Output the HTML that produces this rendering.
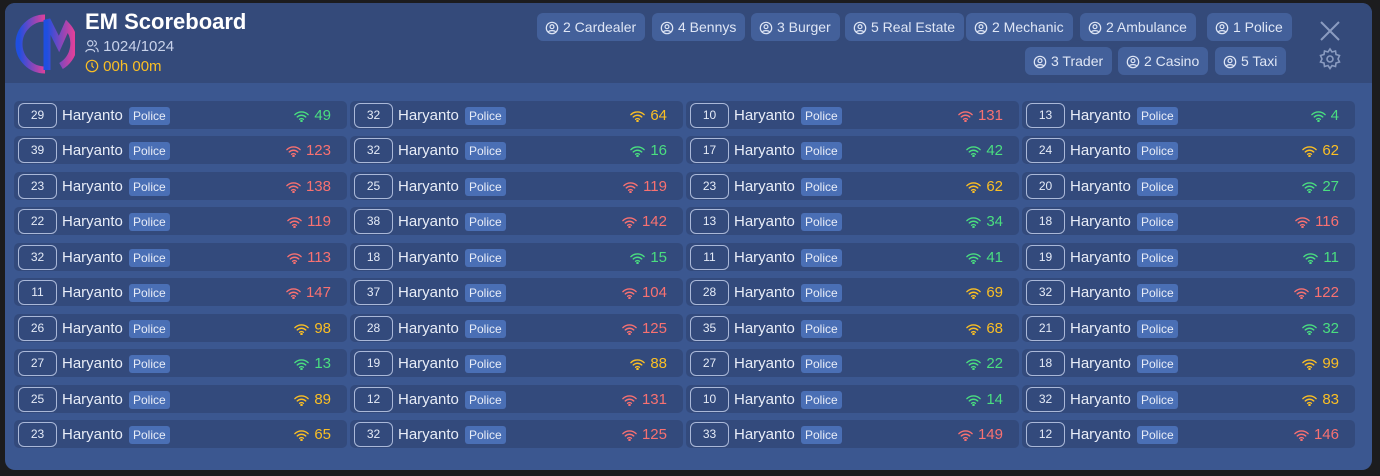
<!DOCTYPE html><html><head><style>
*{box-sizing:border-box;margin:0;padding:0}
body{width:1380px;height:476px;background:#1c1c1e;font-family:"Liberation Sans",sans-serif;overflow:hidden;position:relative}
.panel{position:absolute;left:5px;top:3px;width:1367px;height:467px;background:#3b5790;border-radius:10px;overflow:hidden}
.hdr{position:absolute;left:0;top:0;width:100%;height:80px;background:#344a7a}
.title{position:absolute;left:80px;top:6px;color:#fff;font-weight:bold;font-size:22px}
.sub{position:absolute;left:80px;color:#c8d2ea;font-size:15px}
.chip{position:absolute;height:28px;background:#43609a;border-radius:6px;color:#dfe6f5;font-size:14px;line-height:28px;padding:0 9px 0 8px;white-space:nowrap}
.chip svg{vertical-align:-3px;margin-right:4px}
.row{position:absolute;height:28px;width:333px;background:#334a7c;border-radius:5px}
.num{position:absolute;left:4px;top:2px;width:39px;height:25px;border:1px solid #aab8d8;border-radius:6px;color:#e5ebf7;font-size:12px;text-align:center;line-height:23px}
.name{position:absolute;left:48px;top:6px;color:#e8edf8;font-size:15px}
.tag{position:absolute;left:115px;top:6px;background:#4a6fb5;color:#e8edf8;font-size:12px;padding:1px 4px;border-radius:3px;line-height:16px}
.pg{position:absolute;right:16px;top:6px;font-size:15px;display:flex;align-items:center;gap:5px}
.g{color:#4ade80}.y{color:#fbbf24}.r{color:#f87171}
</style></head><body><div class="panel">
<div class="hdr">
<svg style="position:absolute;left:10px;top:11px" width="60" height="60" viewBox="0 0 60 60"><defs><linearGradient id="lg" x1="0" x2="1"><stop offset="0" stop-color="#1f4fe0"/><stop offset="1" stop-color="#e0409a"/></linearGradient></defs>
<path d="M30 4A26 26 0 1 0 30 56" fill="none" stroke="url(#lg)" stroke-width="7"/><path d="M8 30H28" stroke="url(#lg)" stroke-width="6"/><path d="M32 56V6L44 30L52 12A26 26 0 0 1 46 52" fill="none" stroke="url(#lg)" stroke-width="7"/></svg>
<div class="title">EM Scoreboard</div>
<div class="sub" style="top:35px"><svg width="14" height="14" viewBox="0 0 16 16" fill="none" stroke="#c8d2ea" stroke-width="1.3" style="vertical-align:-2px"><circle cx="6" cy="5" r="3"/><path d="M1 15c0-4 10-4 10 0M10 2a3 3 0 0 1 0 6M12 10c2 .5 3 2 3 5"/></svg> 1024/1024</div>
<div class="sub" style="top:55px;color:#fbbf24"><svg width="14" height="14" viewBox="0 0 16 16" fill="none" stroke="#fbbf24" stroke-width="1.4" style="vertical-align:-2px"><circle cx="8" cy="8" r="6.5"/><path d="M8 4v4l2 2"/></svg> 00h 00m</div>
</div>
<div id="chips"></div>
<svg style="position:absolute;left:1315px;top:18px" width="20" height="20"><path d="M1 1L19 19M19 1L1 19" stroke="#8a9bc0" stroke-width="2"/></svg>
<svg style="position:absolute;left:1313px;top:44px" width="24" height="24" viewBox="0 0 24 24" fill="none" stroke="#8a9bc0" stroke-width="1.6"><circle cx="12" cy="12" r="3"/><path d="M12 2l2 3 3.5-1 .5 3.5 3.5 1-1.5 3.5 1.5 3-3.5 1-.5 3.5-3.5-1-2 3-2-3-3.5 1-.5-3.5-3.5-1 1.5-3-1.5-3.5 3.5-1 .5-3.5 3.5 1z"/></svg>
<div id="rows"></div>
</div>
<script>
var ic='<svg width="14" height="14" viewBox="0 0 16 16" fill="none" stroke="#dfe6f5" stroke-width="1.4"><circle cx="8" cy="8" r="6.5"/><circle cx="8" cy="6.5" r="2.2"/><path d="M4 12.5c1-2 7-2 8 0"/></svg>';
var c=[[532,10,"2 Cardealer"],[647,10,"4 Bennys"],[746,10,"3 Burger"],[840,10,"5 Real Estate"],[961,10,"2 Mechanic"],[1075,10,"2 Ambulance"],[1202,10,"1 Police"],[1020,44,"3 Trader"],[1113,44,"2 Casino"],[1210,44,"5 Taxi"]];
var h='';c.forEach(function(a){h+='<div class="chip" style="left:'+a[0]+'px;top:'+a[1]+'px">'+ic+a[2]+'</div>'});
document.getElementById('chips').innerHTML=h;
var d=[[[29,49],[32,64],[10,131],[13,4]],[[39,123],[32,16],[17,42],[24,62]],[[23,138],[25,119],[23,62],[20,27]],[[22,119],[38,142],[13,34],[18,116]],[[32,113],[18,15],[11,41],[19,11]],[[11,147],[37,104],[28,69],[32,122]],[[26,98],[28,125],[35,68],[21,32]],[[27,13],[19,88],[27,22],[18,99]],[[25,89],[12,131],[10,14],[32,83]],[[23,65],[32,125],[33,149],[12,146]]];
var ys=[98,133,169,204,240,275,311,346,382,417];h='';
function cl(p){return p<50?'g':p<100?'y':'r'}
function wf(k){var col=k=='g'?'#4ade80':k=='y'?'#fbbf24':'#f87171';return '<svg width="15" height="12" viewBox="0 0 16 12" fill="none" stroke="'+col+'" stroke-width="1.5" stroke-linecap="round"><path d="M1 4.5a10 10 0 0 1 14 0M3.5 7a6.5 6.5 0 0 1 9 0M6 9.5a3 3 0 0 1 4 0"/><circle cx="8" cy="11.3" r=".6" fill="'+col+'"/></svg>'}
for(var i=0;i<10;i++)for(var j=0;j<4;j++){var e=d[i][j],k=cl(e[1]);
h+='<div class="row" style="left:'+(9+j*336)+'px;top:'+ys[i]+'px"><div class="num">'+e[0]+'</div><div class="name">Haryanto</div><div class="tag">Police</div><div class="pg '+k+'">'+wf(k)+'<span>'+e[1]+'</span></div></div>'}
document.getElementById('rows').innerHTML=h;
</script></body></html>
